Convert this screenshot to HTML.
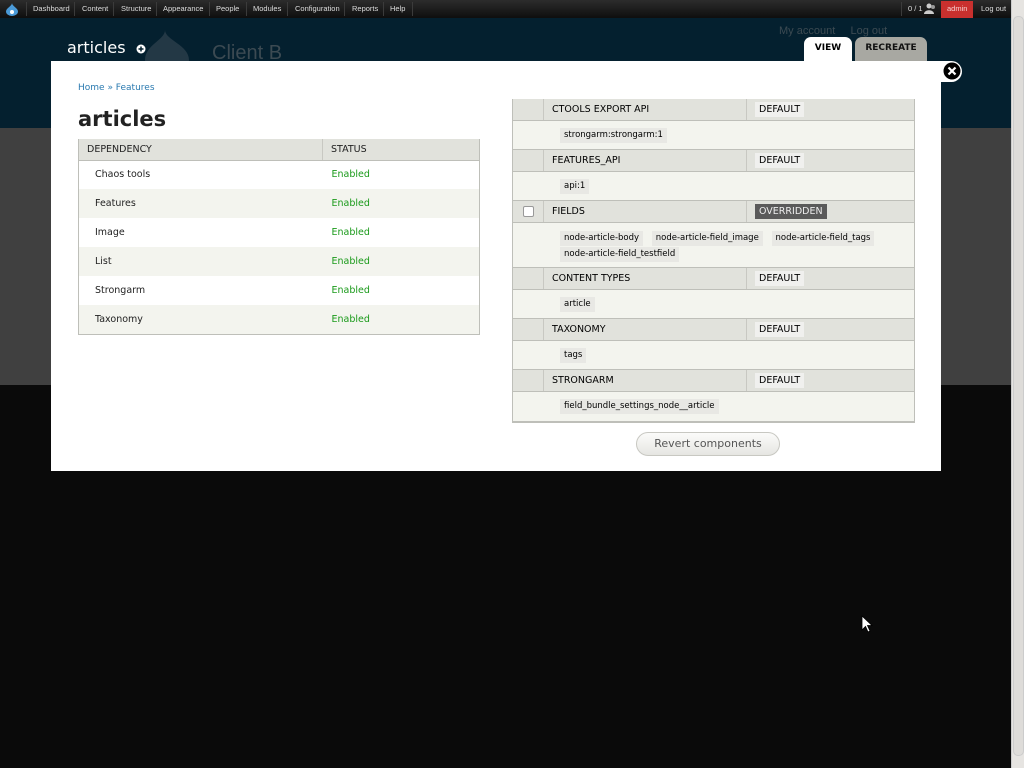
<!DOCTYPE html>
<html><head><meta charset="utf-8"><style>
*{margin:0;padding:0;box-sizing:border-box}
body{width:1024px;height:768px;overflow:hidden;background:#0a0a0a;font-family:"DejaVu Sans","Liberation Sans",sans-serif;position:relative}
.a{position:absolute}
#tb{left:0;top:0;width:1011px;height:18px;background:linear-gradient(#2c2c2c,#0e0e0e);}
#tb span{position:absolute;top:0;height:18px;line-height:18px;font-size:7.5px;color:#ddd;font-family:"Liberation Sans",sans-serif}
.sep{position:absolute;top:2px;width:1px;height:14px;background:#3b3b3b}
#hdr{left:0;top:18px;width:1011px;height:110px;background:#04202f}
#grey{left:0;top:128px;width:1011px;height:257px;background:#404040}
#sb{left:1011px;top:0;width:13px;height:768px;background:#e6e4e1;border-left:1px solid #ccc}
#modal{left:51px;top:61px;width:890px;height:410px;background:#fff}
table{border-collapse:collapse;font-size:9.5px;color:#222}
.lt td,.lt th{height:29px;padding-left:16px;text-align:left;font-weight:normal}
.lt th{height:21px;background:#e1e2dc;padding-left:8px;border-bottom:1px solid #bebfb9}
.lt tr:nth-child(odd) td{background:#f3f4ee}
.en{color:#1a9a1a}
.r{position:absolute;left:512px;width:403px;border:1px solid #bebfb9;border-top:none}
.rh{height:22px;background:#e1e2dc;border-bottom:1px solid #bebfb9;position:relative;font-size:9.5px}
.rh .c1{position:absolute;left:0;top:0;width:31px;height:21px;border-right:1px solid #c8c8c2}
.rh .n{position:absolute;left:39px;top:0;line-height:21px}
.rh .s{position:absolute;left:233px;top:0;height:21px;border-left:1px solid #c8c8c2;padding-left:8px}
.rh .s b{display:inline-block;margin-top:3px;font-weight:normal;background:#f0f0ee;padding:0 4px;line-height:15px}
.rb{background:#f3f4ee;border-bottom:1px solid #bebfb9;padding:7px 0 0 47px;font-size:8.5px}
.rb b{font-weight:normal;display:inline-block;background:#e8e8e4;padding:0 4px;line-height:15px;margin:0 6px 1px 0}
</style></head><body>
<div class="a" id="tb">
<svg class="a" style="left:6px;top:3px" width="12" height="13" viewBox="0 0 12 13"><path d="M6 0C6 3 0 5 0 8.5A6 4.5 0 0 0 12 8.5C12 5 6 3 6 0Z" fill="#4a9ad8"/><circle cx="6" cy="9" r="2" fill="#fff"/></svg>
<div class="sep" style="left:26px"></div>
<span style="left:33px">Dashboard</span><div class="sep" style="left:74px"></div>
<span style="left:82px">Content</span><div class="sep" style="left:113px"></div>
<span style="left:121px">Structure</span><div class="sep" style="left:156px"></div>
<span style="left:163px">Appearance</span><div class="sep" style="left:209px"></div>
<span style="left:216px">People</span><div class="sep" style="left:246px"></div>
<span style="left:253px">Modules</span><div class="sep" style="left:287px"></div>
<span style="left:295px">Configuration</span><div class="sep" style="left:344px"></div>
<span style="left:352px">Reports</span><div class="sep" style="left:383px"></div>
<span style="left:390px">Help</span><div class="sep" style="left:412px"></div>
<div class="sep" style="left:901px"></div>
<span style="left:908px">0 / 1</span>
<svg class="a" style="left:924px;top:3px" width="13" height="12"><circle cx="5" cy="3" r="2.5" fill="#ccc"/><path d="M0 11C0 6 10 6 10 11Z" fill="#ccc"/><circle cx="9" cy="4" r="2" fill="#999"/></svg>
<div class="a" style="left:941px;top:1px;width:32px;height:17px;background:#c9302e"></div>
<span style="left:947px;color:#f5d0d0">admin</span>
<span style="left:981px">Log out</span>
</div>
<div class="a" id="hdr">
<div class="a" style="left:67px;top:20px;color:#fff;font-size:16px">articles</div>
<svg class="a" style="left:136px;top:26px" width="10" height="10"><circle cx="5" cy="5" r="4.5" fill="#fff"/><path d="M5 2.5V7.5M2.5 5H7.5" stroke="#04202f" stroke-width="1.5"/></svg>
<svg class="a" style="left:145px;top:12px" width="45" height="40"><path d="M20 0C20 10 0 15 0 30A22 18 0 0 0 44 30C44 15 20 10 20 0Z" fill="#233845"/></svg>
<div class="a" style="left:212px;top:24px;color:#3c4a52;font-size:20px;font-family:'Liberation Sans',sans-serif">Client B</div>
<div class="a" style="left:779px;top:7px;color:#3c4a52;font-size:11px;font-family:'Liberation Sans',sans-serif">My account &nbsp;&nbsp;&nbsp; Log out</div>
<div class="a" style="left:804px;top:19px;width:48px;height:24px;background:#fff;border-radius:7px 7px 0 0;text-align:center;font-size:9px;font-weight:bold;line-height:22px;color:#000">VIEW</div>
<div class="a" style="left:855px;top:19px;width:72px;height:24px;background:#a8a8a2;border-radius:7px 7px 0 0;text-align:center;font-size:9px;font-weight:bold;line-height:22px;color:#111">RECREATE</div>
</div>
<div class="a" id="grey"></div>
<div class="a" id="sb"><div class="a" style="left:1px;top:16px;width:11px;height:740px;background:#dedcd9;border:1px solid #ccc;border-radius:5px"></div></div>
<div class="a" id="modal">
<div class="a" style="left:27px;top:22px;font-size:9px;color:#2a7ab0">Home » Features</div>
<div class="a" style="left:27px;top:46px;font-size:21px;font-weight:bold;color:#222">articles</div>
<table class="a lt" style="left:27px;top:78px;width:402px;border:1px solid #bebfb9;border-top:none">
<tr><th style="width:244px;border-right:1px solid #c8c8c2">DEPENDENCY</th><th>STATUS</th></tr>
<tr><td>Chaos tools</td><td class="en" style="padding-left:9px">Enabled</td></tr>
<tr><td>Features</td><td class="en" style="padding-left:9px">Enabled</td></tr>
<tr><td>Image</td><td class="en" style="padding-left:9px">Enabled</td></tr>
<tr><td>List</td><td class="en" style="padding-left:9px">Enabled</td></tr>
<tr><td>Strongarm</td><td class="en" style="padding-left:9px">Enabled</td></tr>
<tr><td>Taxonomy</td><td class="en" style="padding-left:9px">Enabled</td></tr>
</table>
<div class="a" style="left:585px;top:371px;width:144px;height:24px;border:1px solid #c8c8c2;border-radius:12px;background:linear-gradient(#fbfbfa,#e6e6e2);text-align:center;line-height:22px;font-size:11px;color:#555">Revert components</div>
</div>
<div class="r" style="top:99px">
<div class="rh"><div class="c1"></div><div class="n">CTOOLS EXPORT API</div><div class="s"><b>DEFAULT</b></div></div>
<div class="rb" style="height:29px"><b>strongarm:strongarm:1</b></div>
<div class="rh"><div class="c1"></div><div class="n">FEATURES_API</div><div class="s"><b>DEFAULT</b></div></div>
<div class="rb" style="height:29px"><b>api:1</b></div>
<div class="rh"><div class="c1"><div class="a" style="left:10px;top:5px;width:11px;height:11px;background:#fff;border:1px solid #999;border-radius:2px"></div></div><div class="n">FIELDS</div><div class="s"><b style="background:#5a5a5a;color:#eee">OVERRIDDEN</b></div></div>
<div class="rb" style="height:45px;padding-top:8px"><b>node-article-body</b> <b>node-article-field_image</b> <b>node-article-field_tags</b><br><b>node-article-field_testfield</b></div>
<div class="rh"><div class="c1"></div><div class="n">CONTENT TYPES</div><div class="s"><b>DEFAULT</b></div></div>
<div class="rb" style="height:29px"><b>article</b></div>
<div class="rh"><div class="c1"></div><div class="n">TAXONOMY</div><div class="s"><b>DEFAULT</b></div></div>
<div class="rb" style="height:29px"><b>tags</b></div>
<div class="rh"><div class="c1"></div><div class="n">STRONGARM</div><div class="s"><b>DEFAULT</b></div></div>
<div class="rb" style="height:30px"><b>field_bundle_settings_node__article</b></div>
</div>
<div class="a" style="left:930px;top:61px;width:32px;height:21px;background:#fff;border-radius:0 11px 11px 0"></div>
<svg class="a" style="left:943px;top:62px" width="18" height="18"><circle cx="9" cy="9" r="8.5" fill="#000"/><path d="M5.5 5.5L12.5 12.5M12.5 5.5L5.5 12.5" stroke="#fff" stroke-width="2.2"/></svg>
<svg class="a" style="left:861px;top:615px" width="12" height="18"><path d="M1 1V15L4.5 11.5L7 17L9 16L6.5 10.5H11Z" fill="#fff" stroke="#000" stroke-width="0.8"/></svg>
</body></html>
